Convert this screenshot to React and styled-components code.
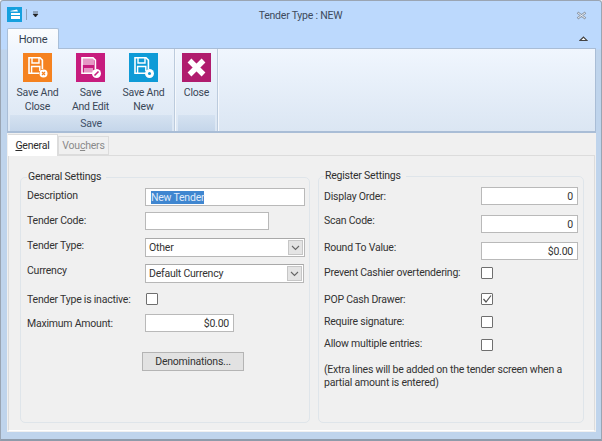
import React from "react";
import styled, { createGlobalStyle } from "styled-components";

const fs = "10.5px";

const Global = createGlobalStyle`
  html, body { margin: 0; padding: 0; background: #fff; }
  body { font-family: "Roboto", "Noto Sans", sans-serif; font-size: ${fs}; letter-spacing: -0.22px; color: #2b2b2b; }
  * { box-sizing: border-box; }
`;

const Win = styled.div`
  width: 602px; height: 441px;
  background: linear-gradient(#bcd9fd 0, #bcd9fd 48px, #bfd4ec 49px);
  border: 1px solid #9aa5b3;
  border-bottom: 2px solid #8f9baa;
  border-radius: 3px 3px 0 0;
  display: flex; flex-direction: column;
  overflow: hidden;
`;
const TitleBar = styled.div`
  height: 26px; display: flex; align-items: center;
  padding: 1px 14px 0 6px; flex: none;
`;
const QuickIcon = styled.svg` width: 15px; height: 15px; flex: none; `;
const QuickSep = styled.div` width: 1px; height: 11px; background: #8ea2bb; margin: 0 5px 0 4px; `;
const TitleText = styled.div`
  flex: 1; text-align: center; color: #3d4a5c; font-size: ${fs}; margin-left: -14px; padding-top: 1px;
`;
const CloseGlyph = styled.svg` margin-top: 1px; `;
const TabRow = styled.div`
  height: 21px; flex: none; display: flex; align-items: flex-end; justify-content: space-between;
  padding: 0 13px 0 6px;
`;
const HomeTab = styled.div`
  width: 52px; height: 21px; background: linear-gradient(#fafcfe, #f0f6fd);
  border: 1px solid #a9bfd8; border-bottom: none; border-radius: 2px 2px 0 0;
  display: flex; align-items: center; justify-content: center; font-size: 11px; color: #33404f;
  margin-bottom: -1px; position: relative; z-index: 1;
`;
const Collapse = styled.svg` width: 9px; height: 7px; margin-bottom: 6px; `;
const Ribbon = styled.div`
  height: 85px; flex: none; margin: 0 5px 0 6px;
  background: linear-gradient(#f0f6fe, #dbe6f3);
  border-top: 1px solid #a9bdd6; border-bottom: 2px solid #a9bdd6; border-right: 1px solid #a9bdd6;
  border-left: 1px solid #a9bdd6;
  display: flex;
`;
const RibbonGroup = styled.div`
  width: ${p => p.$w}px; flex: none; display: flex; flex-direction: column; padding: 0 ${p => p.$pr}px 0 ${p => p.$pl}px;
  border-right: 1px solid #bccbdd;
  box-shadow: 1px 0 0 #f5f8fc;
  margin-right: 1px;
`;
const Cmds = styled.div` flex: 1; display: flex; padding-left: ${p => p.$pl || 0}px; `;
const Cmd = styled.div`
  width: ${p => p.$w}px; flex: none; display: flex; flex-direction: column; align-items: center;
  padding-top: 4px; text-align: center; color: #3a4757; line-height: 14px; font-size: ${fs};
  white-space: nowrap;
  svg { width: 29px; height: 29px; margin-bottom: 4px; flex: none; }
`;
const GroupLabel = styled.div`
  height: 16px; background: linear-gradient(#d5e2f1, #c5d6ea);
  text-align: center; color: #3f5068; line-height: 17px; font-size: ${fs};
`;
const Body = styled.div`
  flex: 1; margin: 0 5px 0 6px; background: #f0f0f0; display: flex; flex-direction: column;
  min-height: 0;
`;
const Tabs = styled.div`
  height: 22px; flex: none; display: flex; align-items: flex-end; padding-left: 1px;
  position: relative; z-index: 1;
`;
const TabBtn = styled.div`
  height: ${p => (p.$active ? 22 : 19)}px; width: ${p => (p.$active ? 50 : 51)}px;
  background: ${p => (p.$active ? "#fff" : "#f0f0f0")};
  border: 1px solid #dcdcdc; border-bottom: ${p => (p.$active ? "none" : "1px solid #dcdcdc")};
  border-left: ${p => (p.$active ? "none" : "1px solid #dcdcdc")};
  color: ${p => (p.$active ? "#2b2b2b" : "#8a8a8a")};
  display: flex; align-items: center; justify-content: center; font-size: ${fs};
  margin-bottom: ${p => (p.$active ? -1 : 0)}px;
  u { text-underline-offset: 1px; }
`;
const Panel = styled.div`
  flex: 1; margin: 0 1px 1px 1px; border: 1px solid #dcdcdc; border-bottom-color: #fff;
  display: grid; grid-template-columns: 290px 266px; column-gap: 8px;
  padding: 13px 0 7px 11px; min-height: 0;
`;
const Group = styled.fieldset`
  margin: ${p => p.$top}px 0 0; padding: 0 ${p => p.$pr}px 0 ${p => p.$pl}px; border: 1px solid #dfe5ea; border-radius: 5px;
  min-width: 0; display: block;
`;
const Legend = styled.legend`
  padding: 0 5px 0 1px; margin-left: 0; font-size: ${fs}; line-height: 14px; color: #2f2f2f;
`;
const Row = styled.div`
  display: flex; align-items: center; height: ${p => p.$h || 18}px; margin-top: ${p => p.$mt || 0}px;
`;
const Label = styled.div`
  width: ${p => p.$w}px; flex: none; font-size: ${fs}; color: #333; white-space: nowrap;
  margin-top: ${p => (p.$up ? -p.$up : 0)}px;
`;
const Input = styled.div`
  width: ${p => p.$w}px; height: 18px; flex: none; background: #fff; border: 1px solid #b9b9b9;
  display: flex; align-items: center;
  justify-content: ${p => (p.$right ? "flex-end" : "flex-start")};
  padding: 0 4px; font-size: ${fs}; color: #333;
`;
const Selected = styled.span` background: #3f86d0; color: #dfeafa; margin-left: 1px; line-height: 13px; `;
const Select = styled.div`
  width: ${p => p.$w}px; height: 19px; flex: none; background: #fff; border: 1px solid #b7b7b7; border-top-color:#a9a9a9;
  display: flex; align-items: center; padding-left: 3px; font-size: ${fs}; color: #333;
  justify-content: space-between;
`;
const Arrow = styled.div`
  width: 15px; height: 15px; margin-right: 1px; background: #e4e4e4; border: 1px solid #c6c6c6;
  display: flex; align-items: center; justify-content: center;
`;
const Check = styled.div`
  width: 12px; height: 12px; flex: none; background: #fff; border: 1px solid #6f6f6f; border-radius: 1px;
  display: flex; align-items: center; justify-content: center;
`;
const ButtonRow = styled.div` display: flex; padding-left: 115px; margin-top: 20px; `;
const Button = styled.div`
  width: 102px; height: 19px; background: #e2e2e2; border: 1px solid #b4b4b4;
  display: flex; align-items: center; justify-content: center; font-size: ${fs}; color: #333;
`;
const Note = styled.div`
  margin-top: 13px; line-height: 12.5px; font-size: ${fs}; color: #333; white-space: nowrap;
`;
const BottomFrame = styled.div` height: 7px; flex: none; `;

const Floppy = ({ bg, children, stripes }) => (
  <svg viewBox="0 0 29 29">
    <rect width="29" height="29" fill={bg} />
    <path d="M16 20.2H6V4.8h11l2.4 2.4v8.8" fill="none" stroke="#fff" strokeWidth="1.6" />
    {stripes ? (
      <path d="M6 5h12v7H6z M8 15h9v5H8z" fill="#fff" opacity=".55" />
    ) : (
      <path d="M9 5v5h7V5 M8.6 20v-6.5h8.2V18" fill="none" stroke="#fff" strokeWidth="1.4" />
    )}
    {children}
  </svg>
);

const Chevron = () => (
  <svg width="9" height="6" viewBox="0 0 9 6"><path d="M1 1l3.5 3.5L8 1" fill="none" stroke="#666" strokeWidth="1.1" /></svg>
);

export default function App() {
  return (
    <>
      <Global />
      <Win>
        <TitleBar>
          <QuickIcon viewBox="0 0 15 15">
            <rect width="15" height="15" fill="#15a0de" />
            <path d="M3 4l7-1.5 1 2H4z" fill="#fff" />
            <rect x="4" y="6" width="9" height="6" fill="#fff" />
            <rect x="4" y="8" width="9" height="1" fill="#15a0de" />
          </QuickIcon>
          <QuickSep />
          <svg width="7" height="7" viewBox="0 0 7 7"><path d="M1 1h5M1 3h5l-2.5 3z" fill="#222" stroke="#222" strokeWidth=".6" /></svg>
          <TitleText>Tender Type : NEW</TitleText>
          <CloseGlyph width="11" height="9" viewBox="0 0 11 9"><path d="M1.5 1.5l8 6M9.5 1.5l-8 6" stroke="#8b97a6" strokeWidth="2.4" /><path d="M2 2l7 5M9 2l-7 5" stroke="#eef3f9" strokeWidth=".9" /></CloseGlyph>
        </TitleBar>
        <TabRow>
          <HomeTab>Home</HomeTab>
          <Collapse viewBox="0 0 9 7"><path d="M1 5.5l3.5-3.5L8 5.5z" fill="#fff" stroke="#444" strokeWidth="1.2" /></Collapse>
        </TabRow>
        <Ribbon>
          <RibbonGroup $w={167} $pl={2} $pr={2}>
            <Cmds $pl={1}>
              <Cmd $w={53}>
                <Floppy bg="#f58220"><circle cx="20.5" cy="20.5" r="4" fill="#fff" /><path d="M19 19l3 3M22 19l-3 3" stroke="#f58220" strokeWidth="1.2" /></Floppy>
                <span>Save And<br />Close</span>
              </Cmd>
              <Cmd $w={53}>
                <Floppy bg="#c71c7e" stripes><circle cx="20.5" cy="20.5" r="4.5" fill="#fff" /><path d="M18.5 22.5l4-4" stroke="#c71c7e" strokeWidth="1.6" /></Floppy>
                <span>Save<br />And Edit</span>
              </Cmd>
              <Cmd $w={53}>
                <Floppy bg="#0f9bd7"><circle cx="20.5" cy="20.5" r="4.5" fill="#fff" /><circle cx="20.5" cy="20.5" r="1.5" fill="#0f9bd7" /></Floppy>
                <span>Save And<br />New</span>
              </Cmd>
            </Cmds>
            <GroupLabel>Save</GroupLabel>
          </RibbonGroup>
          <RibbonGroup $w={42} $pl={2} $pr={2}>
            <Cmds>
              <Cmd $w={37}>
                <svg viewBox="0 0 29 29"><rect width="29" height="29" fill="#b01c6e" /><path d="M7.5 7.5l14 14M21.5 7.5l-14 14" stroke="#fff" strokeWidth="5.4" /></svg>
                <span>Close</span>
              </Cmd>
            </Cmds>
            <GroupLabel />
          </RibbonGroup>
        </Ribbon>
        <Body>
          <Tabs>
            <TabBtn $active><span><u>G</u>eneral</span></TabBtn>
            <TabBtn><span>Vou<u>c</u>hers</span></TabBtn>
          </Tabs>
          <Panel>
            <Group $top={1} $pr={4} $pl={6}>
              <Legend>General Settings</Legend>
              <Row $mt={4}><Label $w={118} $up={3}>Description</Label><Input $w={160}><Selected>New Tender</Selected></Input></Row>
              <Row $mt={6}><Label $w={118} $up={2}>Tender Code:</Label><Input $w={124} /></Row>
              <Row $mt={8} $h={19}><Label $w={118} $up={4}>Tender Type:</Label><Select $w={160}>Other<Arrow><Chevron /></Arrow></Select></Row>
              <Row $mt={7} $h={19}><Label $w={118} $up={7}>Currency</Label><Select $w={159}>Default Currency<Arrow><Chevron /></Arrow></Select></Row>
              <Row $mt={9} $h={13}><Label $w={119} $up={-2}>Tender Type is inactive:</Label><Check /></Row>
              <Row $mt={9}><Label $w={118} $up={-1}>Maximum Amount:</Label><Input $w={89} $right>$0.00</Input></Row>
              <ButtonRow><Button>Denominations...</Button></ButtonRow>
            </Group>
            <Group $top={0} $pr={6} $pl={5}>
              <Legend>Register Settings</Legend>
              <Row $mt={4}><Label $w={157} $up={-1}>Display Order:</Label><Input $w={97} $right>0</Input></Row>
              <Row $mt={10}><Label $w={157} $up={7}>Scan Code:</Label><Input $w={97} $right>0</Input></Row>
              <Row $mt={9}><Label $w={157} $up={7}>Round To Value:</Label><Input $w={97} $right>$0.00</Input></Row>
              <Row $mt={6} $h={13}><Label $w={157} $up={1}>Prevent Cashier overtendering:</Label><Check /></Row>
              <Row $mt={13} $h={13}><Label $w={157} $up={-2}>POP Cash Drawer:</Label><Check><svg width="10" height="10" viewBox="0 0 10 10"><path d="M1.5 5l2.5 3 5-6.5" fill="none" stroke="#555" strokeWidth="1.2" /></svg></Check></Row>
              <Row $mt={10} $h={13}><Label $w={157} $up={1}>Require signature:</Label><Check /></Row>
              <Row $mt={10} $h={13}><Label $w={157} $up={2}>Allow multiple entries:</Label><Check /></Row>
              <Note>(Extra lines will be added on the tender screen when a<br />partial amount is entered)</Note>
            </Group>
          </Panel>
        </Body>
        <BottomFrame />
      </Win>
    </>
  );
}
